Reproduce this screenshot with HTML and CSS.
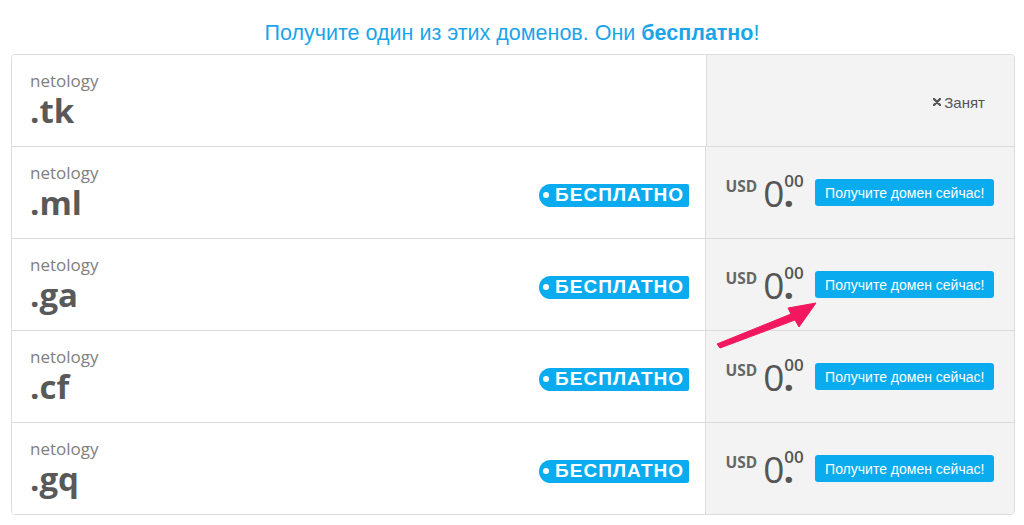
FILE: index.html
```html
<!DOCTYPE html>
<html lang="ru">
<head>
    <meta charset="UTF-8">
    <title>Домены</title>
    <link rel="stylesheet" href="styles.css">
</head>
<body>
    <h1 class="title">Получите один из этих доменов. Они <b>бесплатно</b>!</h1>
    <div class="domains">
        <div class="row">
            <div class="name-cell">
                <div class="name">
                    <div class="prefix">netology</div>
                    <div class="tld">.tk</div>
                </div>
            </div>
            <div class="price-cell taken-cell">
                <span class="taken">
                    <svg class="x-icon" width="8" height="8" viewBox="0 0 8 8"><path d="M1 1L7 7M7 1L1 7" stroke="#555" stroke-width="2.4" stroke-linecap="round"/></svg>
                    Занят
                </span>
            </div>
        </div>
        <div class="row">
            <div class="name-cell">
                <div class="name">
                    <div class="prefix">netology</div>
                    <div class="tld">.ml</div>
                </div>
                <span class="badge"><i class="dot"></i>БЕСПЛАТНО</span>
            </div>
            <div class="price-cell">
                <span class="currency">USD</span>
                <span class="amount">0<span class="point">.</span><sup>00</sup></span>
                <button class="get-btn">Получите домен сейчас!</button>
            </div>
        </div>
        <div class="row">
            <div class="name-cell">
                <div class="name">
                    <div class="prefix">netology</div>
                    <div class="tld">.ga</div>
                </div>
                <span class="badge"><i class="dot"></i>БЕСПЛАТНО</span>
            </div>
            <div class="price-cell">
                <span class="currency">USD</span>
                <span class="amount">0<span class="point">.</span><sup>00</sup></span>
                <button class="get-btn">Получите домен сейчас!</button>
            </div>
        </div>
        <div class="row">
            <div class="name-cell">
                <div class="name">
                    <div class="prefix">netology</div>
                    <div class="tld">.cf</div>
                </div>
                <span class="badge"><i class="dot"></i>БЕСПЛАТНО</span>
            </div>
            <div class="price-cell">
                <span class="currency">USD</span>
                <span class="amount">0<span class="point">.</span><sup>00</sup></span>
                <button class="get-btn">Получите домен сейчас!</button>
            </div>
        </div>
        <div class="row">
            <div class="name-cell">
                <div class="name">
                    <div class="prefix">netology</div>
                    <div class="tld">.gq</div>
                </div>
                <span class="badge"><i class="dot"></i>БЕСПЛАТНО</span>
            </div>
            <div class="price-cell">
                <span class="currency">USD</span>
                <span class="amount">0<span class="point">.</span><sup>00</sup></span>
                <button class="get-btn">Получите домен сейчас!</button>
            </div>
        </div>

        <!-- annotation arrow pointing at the button -->
        <svg class="arrow" width="110" height="60" viewBox="0 0 110 60">
            <polygon points="5,49 79,19 76,13 104,8 87,32 83,25 8,53" fill="#f2175e" stroke="#f2175e" stroke-width="1" stroke-linejoin="round"/>
        </svg>
    </div>
</body>
</html>
```

FILE: styles.css
```css
body {
    margin: 0;
    padding: 0;
    background-color: #fff;
    font-family: "Liberation Sans", Arial, sans-serif;
}
.title {
    margin: 21px 0 9px;
    font-size: 21.5px;
    line-height: 24px;
    font-weight: normal;
    text-align: center;
    color: #1ba5e8;
}
.title b {
    font-weight: bold;
}
.domains {
    position: relative;
    margin: 0 9px 0 11px;
    border: 1px solid #dcdcdc;
    border-radius: 4px;
    overflow: hidden;
}
.row {
    display: flex;
    height: 91px;
    border-top: 1px solid #dcdcdc;
}
.row:first-child {
    border-top: none;
}
.name-cell {
    flex: 1;
    display: flex;
    justify-content: space-between;
    align-items: center;
    padding: 0 16px 0 18px;
    background-color: #fff;
}
.name {
    align-self: flex-start;
    padding-top: 16px;
    font-family: "Open Sans", sans-serif;
}
.prefix {
    font-size: 17px;
    line-height: 20px;
    color: #808080;
}
.tld {
    font-size: 33px;
    line-height: 40px;
    font-weight: 700;
    color: #595959;
}
.badge {
    display: flex;
    align-items: center;
    height: 23px;
    margin-top: 5px;
    padding: 0 5px 0 4px;
    border-radius: 12px 2px 2px 12px;
    background-color: #0aabef;
    color: #fff;
    font-size: 19px;
    letter-spacing: 1px;
    font-weight: bold;
}
.dot {
    width: 6px;
    height: 6px;
    margin-right: 6px;
    border-radius: 50%;
    background-color: #fff;
}
.price-cell {
    width: 308px;
    display: flex;
    align-items: center;
    justify-content: center;
    border-left: 1px solid #dcdcdc;
    background-color: #f3f3f3;
    font-family: "Open Sans", sans-serif;
    color: #555;
}
.taken-cell {
    justify-content: flex-end;
    padding-right: 29px;
    box-sizing: border-box;
    padding-top: 3px;
}
.taken {
    display: flex;
    align-items: center;
    font-family: "Liberation Sans", Arial, sans-serif;
    font-size: 15px;
    color: #555;
}
.x-icon {
    margin-right: 3px;
}
.currency {
    align-self: flex-start;
    margin-top: 29px;
    margin-right: 6px;
    font-size: 15.5px;
    font-weight: 700;
    line-height: 20px;
    color: #666;
}
.amount {
    position: relative;
    font-size: 37px;
    line-height: 40px;
    font-weight: 500;
    letter-spacing: -1px;
}
.point {
    font-weight: 700;
}
.amount sup {
    position: absolute;
    left: 21px;
    top: -1px;
    font-size: 17px;
    line-height: 18px;
    font-weight: 600;
    letter-spacing: 0;
}
.get-btn {
    height: 27px;
    margin-left: 22px;
    padding: 0 10px;
    border: none;
    border-radius: 3px;
    background-color: #0aabef;
    color: #fff;
    font-family: "Liberation Sans", Arial, sans-serif;
    font-size: 14px;
}
.arrow {
    position: absolute;
    left: 700px;
    top: 240px;
}
```
